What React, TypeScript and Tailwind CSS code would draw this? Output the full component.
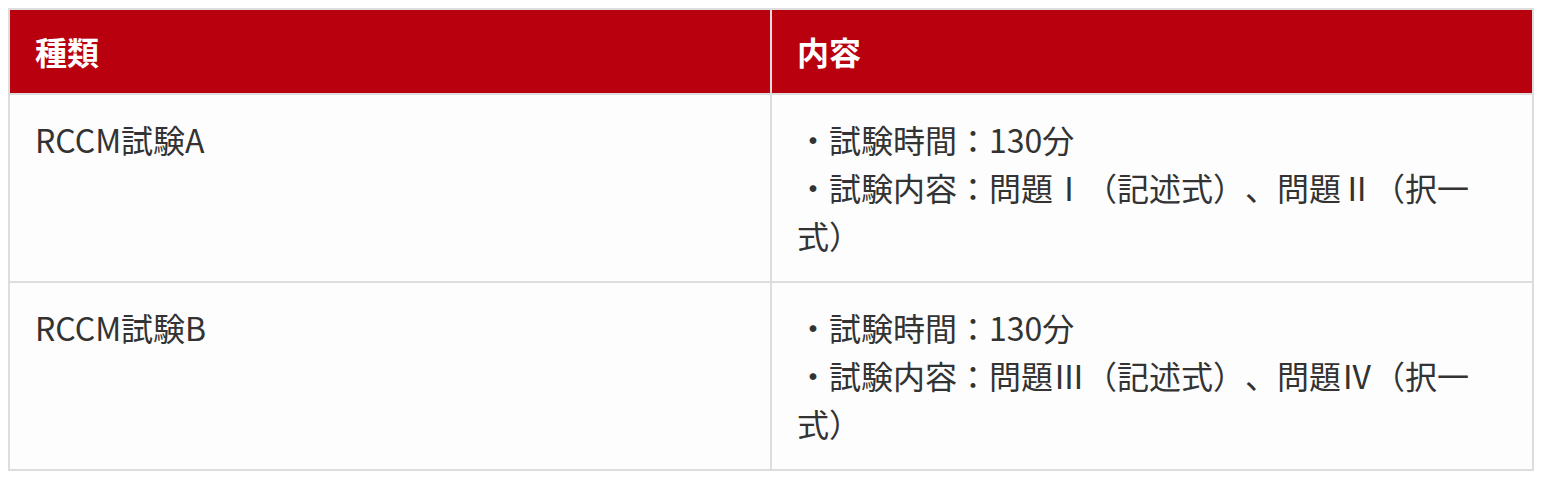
const rows = [
  {
    kind: "RCCM試験A",
    lines: ["・試験時間：130分", "・試験内容：問題Ⅰ（記述式）、問題Ⅱ（択一式）"],
  },
  {
    kind: "RCCM試験B",
    lines: ["・試験時間：130分", "・試験内容：問題Ⅲ（記述式）、問題Ⅳ（択一式）"],
  },
];

export default function App() {
  return (
    <div className="min-h-screen bg-white p-2 font-['Noto_Sans_CJK_JP',sans-serif] text-[32px] leading-[48px] text-[#333] [text-spacing-trim:space-all]">
      <table className="w-full table-fixed border-collapse border-2 border-[#ddd]">
        <thead>
          <tr className="bg-[#b8000f] text-white">
            <th className="border-2 border-[#ddd] px-[25px] pt-[17px] pb-[18px] text-left font-bold">
              種類
            </th>
            <th className="border-2 border-[#ddd] px-[25px] pt-[17px] pb-[18px] text-left font-bold">
              内容
            </th>
          </tr>
        </thead>
        <tbody>
          {rows.map((row) => (
            <tr key={row.kind} className="bg-[#fdfdfd]">
              <td className="h-[186px] border-2 border-[#ddd] px-[25px] pt-[20px] pb-[22px] align-top">
                {row.kind}
              </td>
              <td className="h-[186px] border-2 border-[#ddd] px-[25px] pt-[20px] pb-[22px] align-top">
                {row.lines.map((line) => (
                  <div key={line}>{line}</div>
                ))}
              </td>
            </tr>
          ))}
        </tbody>
      </table>
    </div>
  );
}
